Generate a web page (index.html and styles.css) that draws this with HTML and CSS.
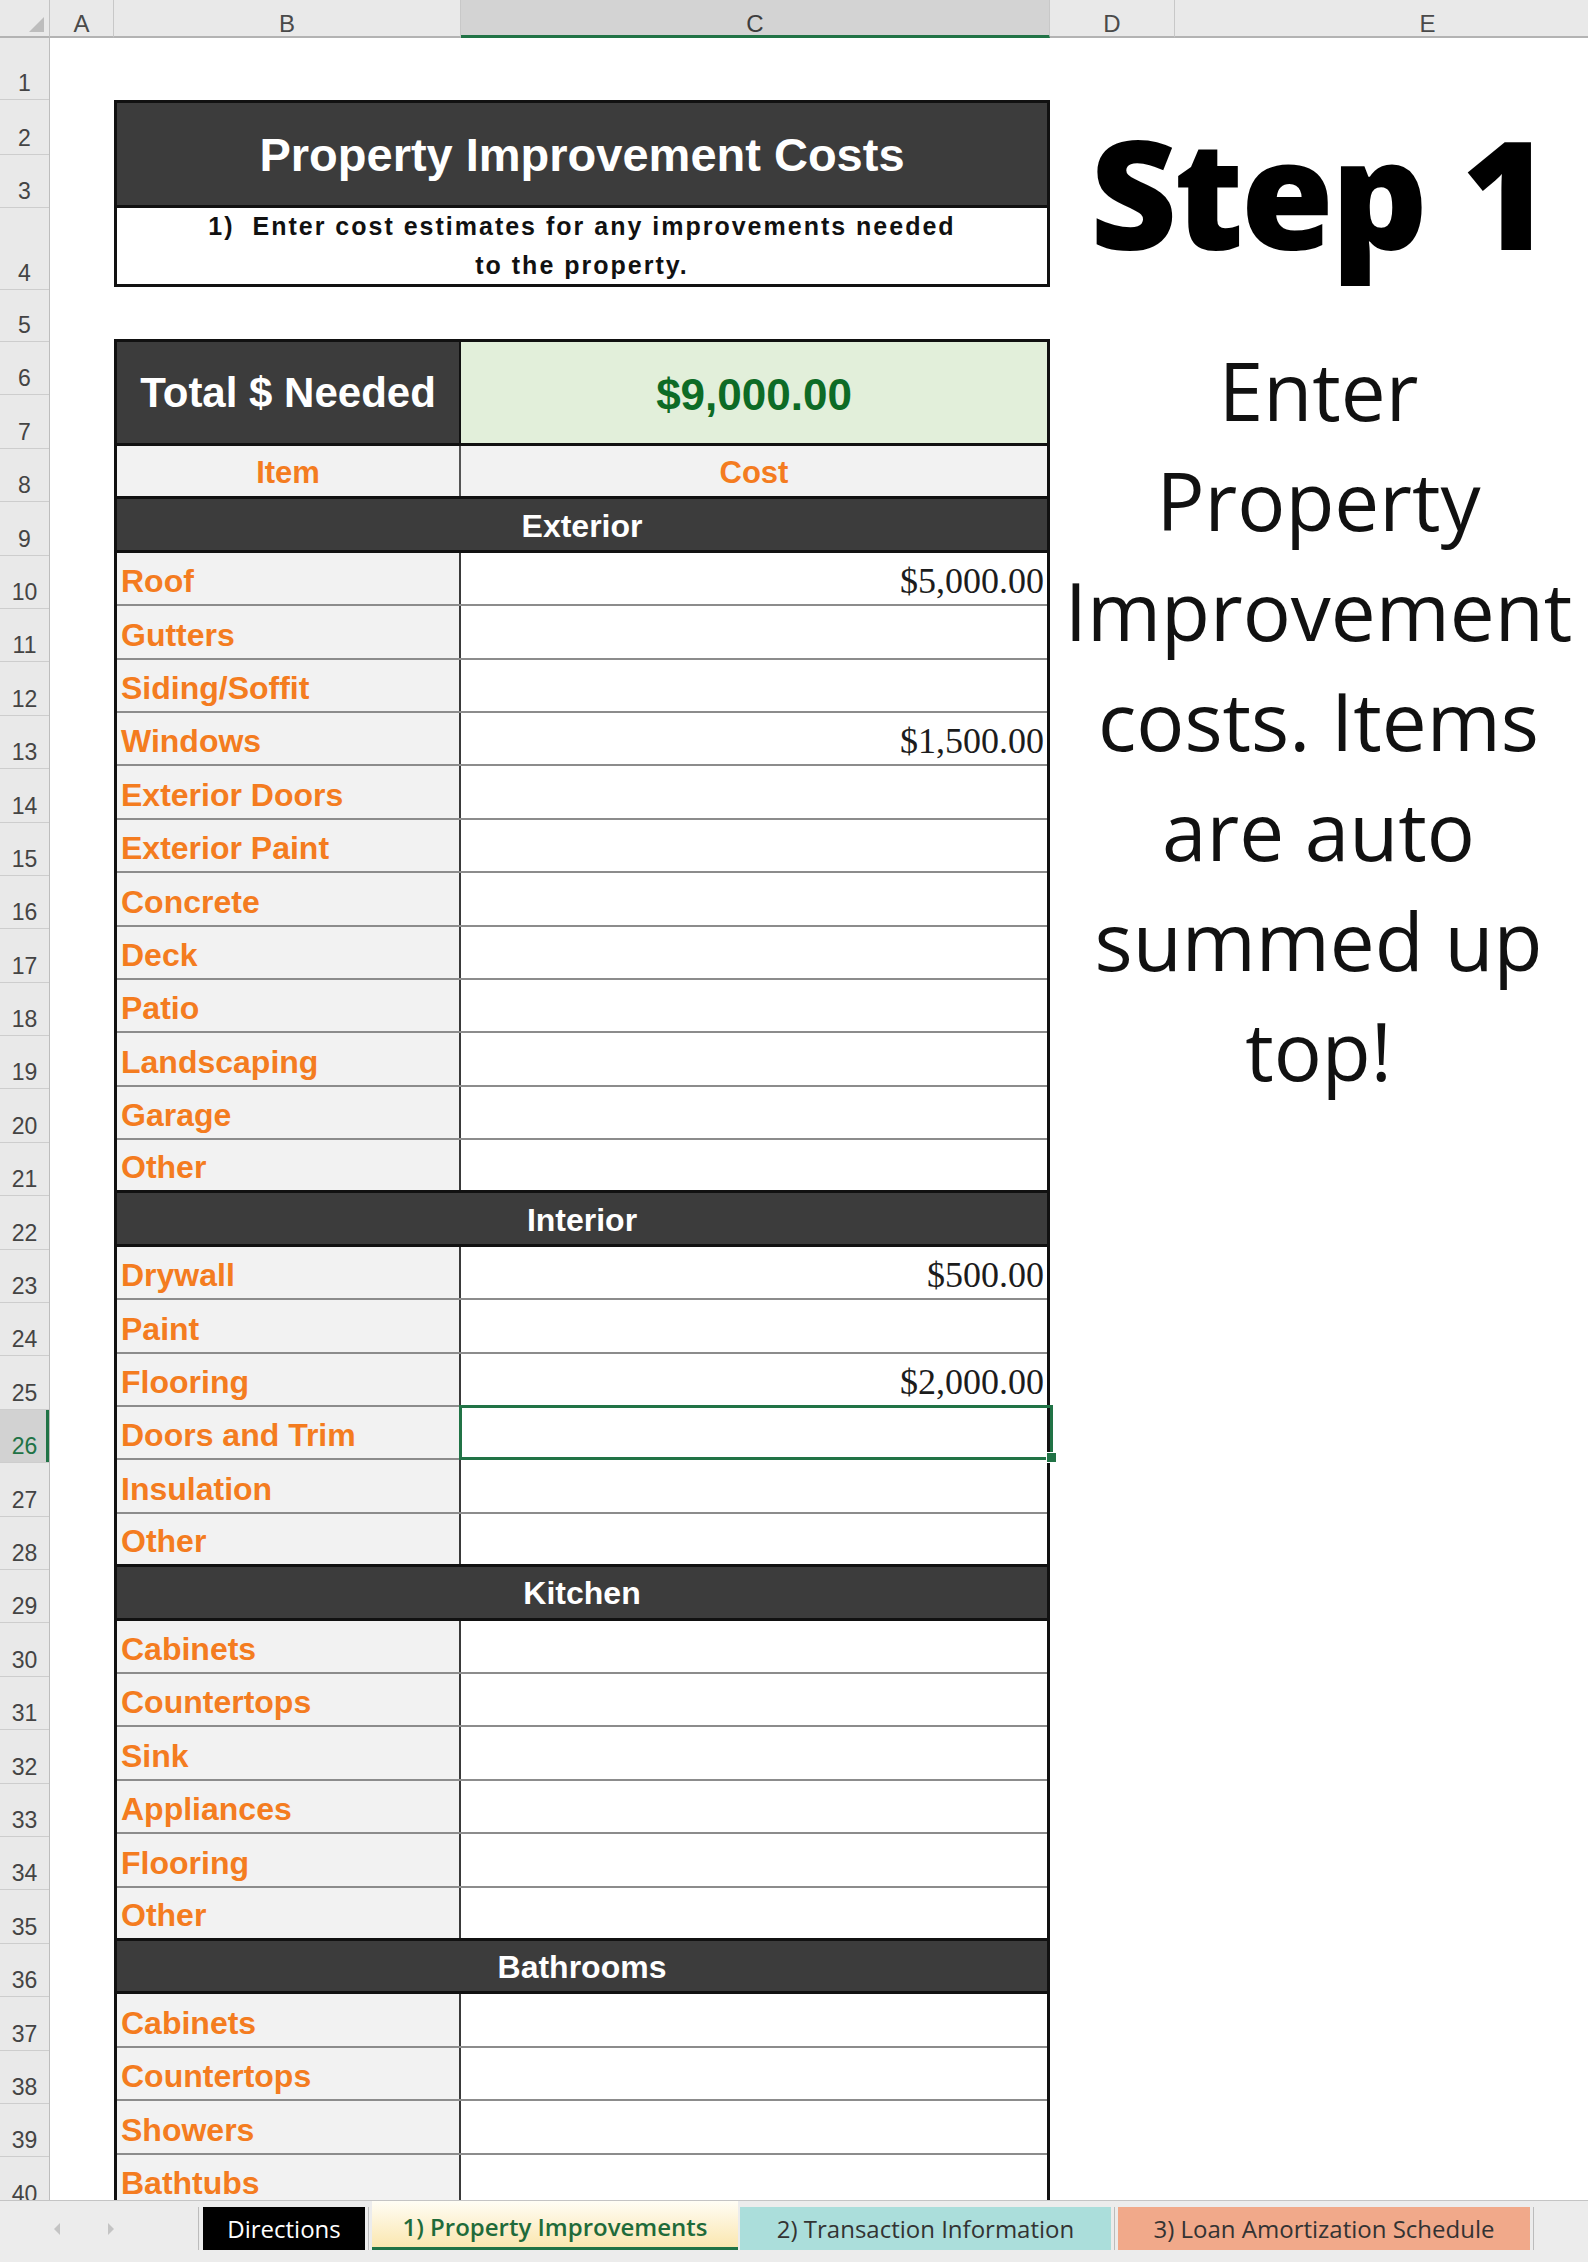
FILE: index.html
```html
<!DOCTYPE html>
<html lang="en">
<head>
<meta charset="utf-8">
<title>Property Improvement Costs</title>
<link rel="stylesheet" href="styles.css">
</head>
<body>
<div class="app">
  <div class="colhead">
    <div class="corner"><svg width="50" height="36" viewBox="0 0 50 36"><polygon points="44,17 44,32 29,32" fill="#bdbdbd"/></svg></div>
    <div class="ch a">A</div>
    <div class="ch b">B</div>
    <div class="ch c sel">C</div>
    <div class="ch d">D</div>
    <div class="ch e">E</div>
  </div>

  <div class="main">
    <div class="rowhead">
      <div class="rn r1">1</div>
      <div class="rn r2">2</div>
      <div class="rn r3">3</div>
      <div class="rn r4">4</div>
      <div class="rn r5">5</div>
      <div class="rn">6</div>
      <div class="rn">7</div>
      <div class="rn">8</div>
      <div class="rn">9</div>
      <div class="rn">10</div>
      <div class="rn">11</div>
      <div class="rn">12</div>
      <div class="rn">13</div>
      <div class="rn">14</div>
      <div class="rn">15</div>
      <div class="rn">16</div>
      <div class="rn">17</div>
      <div class="rn">18</div>
      <div class="rn">19</div>
      <div class="rn">20</div>
      <div class="rn">21</div>
      <div class="rn">22</div>
      <div class="rn">23</div>
      <div class="rn">24</div>
      <div class="rn">25</div>
      <div class="rn sel">26</div>
      <div class="rn">27</div>
      <div class="rn">28</div>
      <div class="rn">29</div>
      <div class="rn">30</div>
      <div class="rn">31</div>
      <div class="rn">32</div>
      <div class="rn">33</div>
      <div class="rn">34</div>
      <div class="rn">35</div>
      <div class="rn">36</div>
      <div class="rn">37</div>
      <div class="rn">38</div>
      <div class="rn">39</div>
      <div class="rn">40</div>
    </div>

    <div class="sheet">
      <div class="left">
        <div class="spacer1"></div>
        <div class="title-box">
          <div class="title-band">Property Improvement Costs</div>
          <div class="title-sub">1)&nbsp; Enter cost estimates for any improvements needed<br>to the property.</div>
        </div>
        <div class="spacer5"></div>

        <div class="tbl">
          <div class="trow total"><div class="b">Total $ Needed</div><div class="c">$9,000.00</div></div>
          <div class="trow hdr"><div class="b">Item</div><div class="c">Cost</div></div>

          <div class="trow section">Exterior</div>
          <div class="trow item"><div class="b">Roof</div><div class="c">$5,000.00</div></div>
          <div class="trow item"><div class="b">Gutters</div><div class="c"></div></div>
          <div class="trow item"><div class="b">Siding/Soffit</div><div class="c"></div></div>
          <div class="trow item"><div class="b">Windows</div><div class="c">$1,500.00</div></div>
          <div class="trow item"><div class="b">Exterior Doors</div><div class="c"></div></div>
          <div class="trow item"><div class="b">Exterior Paint</div><div class="c"></div></div>
          <div class="trow item"><div class="b">Concrete</div><div class="c"></div></div>
          <div class="trow item"><div class="b">Deck</div><div class="c"></div></div>
          <div class="trow item"><div class="b">Patio</div><div class="c"></div></div>
          <div class="trow item"><div class="b">Landscaping</div><div class="c"></div></div>
          <div class="trow item"><div class="b">Garage</div><div class="c"></div></div>
          <div class="trow item last"><div class="b">Other</div><div class="c"></div></div>

          <div class="trow section">Interior</div>
          <div class="trow item"><div class="b">Drywall</div><div class="c">$500.00</div></div>
          <div class="trow item"><div class="b">Paint</div><div class="c"></div></div>
          <div class="trow item"><div class="b">Flooring</div><div class="c">$2,000.00</div></div>
          <div class="trow item"><div class="b">Doors and Trim</div><div class="c sel"></div></div>
          <div class="trow item"><div class="b">Insulation</div><div class="c"></div></div>
          <div class="trow item last"><div class="b">Other</div><div class="c"></div></div>

          <div class="trow section">Kitchen</div>
          <div class="trow item"><div class="b">Cabinets</div><div class="c"></div></div>
          <div class="trow item"><div class="b">Countertops</div><div class="c"></div></div>
          <div class="trow item"><div class="b">Sink</div><div class="c"></div></div>
          <div class="trow item"><div class="b">Appliances</div><div class="c"></div></div>
          <div class="trow item"><div class="b">Flooring</div><div class="c"></div></div>
          <div class="trow item last"><div class="b">Other</div><div class="c"></div></div>

          <div class="trow section">Bathrooms</div>
          <div class="trow item"><div class="b">Cabinets</div><div class="c"></div></div>
          <div class="trow item"><div class="b">Countertops</div><div class="c"></div></div>
          <div class="trow item"><div class="b">Showers</div><div class="c"></div></div>
          <div class="trow item"><div class="b">Bathtubs</div><div class="c"></div></div>
        </div>
      </div>

      <div class="right">
        <div class="step">Step 1</div>
        <div class="desc">Enter<br>Property<br>Improvement<br>costs. Items<br>are auto<br>summed up<br>top!</div>
      </div>
    </div>
  </div>

  <div class="tabbar">
    <div class="tabs">
      <div class="nav">
        <svg class="arrow" width="10" height="14" viewBox="0 0 10 14"><polygon points="8,1 2,7 8,13" fill="#c4c4c4"/></svg>
        <svg class="arrow" width="10" height="14" viewBox="0 0 10 14"><polygon points="2,1 8,7 2,13" fill="#c4c4c4"/></svg>
      </div>
      <div class="sep s0"></div>
      <div class="tab dir">Directions</div>
      <div class="sep s1"></div>
      <div class="tab pi">1) Property Improvements</div>
      <div class="tab ti">2) Transaction Information</div>
      <div class="sep s2"></div>
      <div class="tab las">3) Loan Amortization Schedule</div>
      <div class="sep s3"></div>
    </div>
  </div>
</div>
</body>
</html>
```

FILE: styles.css
```css
* {
  box-sizing: border-box;
  margin: 0;
  padding: 0;
}

html, body {
  width: 1588px;
  height: 2262px;
  overflow: hidden;
  background: #ffffff;
}

body {
  font-family: "Liberation Sans", Arial, sans-serif;
  color: #111111;
}

.app {
  display: flex;
  flex-direction: column;
  height: 2262px;
}

/* ---------- column header ---------- */
.colhead {
  display: flex;
  flex: none;
  height: 38px;
  background: #e9e9e9;
  overflow: hidden;
}

.corner {
  width: 50px;
  flex: none;
  height: 38px;
  border-right: 1px solid #c3c3c3;
  border-bottom: 2px solid #b3b3b3;
}

.corner svg {
  display: block;
}

.ch {
  flex: none;
  height: 38px;
  border-right: 1px solid #c8c8c8;
  border-bottom: 2px solid #b3b3b3;
  text-align: center;
  font-size: 24px;
  line-height: 1;
  padding-top: 12px;
  color: #4a4a4a;
}

.ch.a { width: 64px; }
.ch.b { width: 347px; }
.ch.c { width: 589px; }
.ch.d { width: 125px; }
.ch.e { width: 506px; }

.ch.sel {
  background: #d3d3d3;
  border-bottom: 3px solid #217346;
  color: #3d3d3d;
}

/* ---------- main area ---------- */
.main {
  display: flex;
  flex: 1;
  overflow: hidden;
}

.rowhead {
  width: 50px;
  flex: none;
  background: #e9e9e9;
  border-right: 1px solid #bdbdbd;
}

.rn {
  height: 53.4px;
  border-bottom: 1px solid #cdcdcd;
  display: flex;
  align-items: flex-end;
  justify-content: center;
  font-size: 23px;
  line-height: 27px;
  padding-bottom: 2px;
  color: #444444;
}

.rn.r1 { height: 62px; }
.rn.r2 { height: 55px; }
.rn.r3 { height: 53px; }
.rn.r4 { height: 82px; }
.rn.r5 { height: 52px; }

.rn.sel {
  background: #d2d2d2;
  color: #217346;
  box-shadow: inset -3px 0 0 #217346;
}

.sheet {
  flex: 1;
  display: flex;
  align-items: flex-start;
  overflow: hidden;
}

.left {
  width: 999px;
  flex: none;
  padding-left: 64px;
}

.spacer1 { height: 62px; }
.spacer5 { height: 52px; }

/* ---------- title box ---------- */
.title-box {
  width: 936px;
  border: 3px solid #111111;
}

.title-band {
  height: 105px;
  background: #3c3c3c;
  border-bottom: 3px solid #111111;
  display: flex;
  align-items: center;
  justify-content: center;
  color: #ffffff;
  font-weight: bold;
  font-size: 47px;
}

.title-sub {
  height: 76px;
  display: flex;
  align-items: center;
  justify-content: center;
  text-align: center;
  font-weight: bold;
  font-size: 25px;
  letter-spacing: 2px;
  line-height: 39px;
  color: #111111;
}

/* ---------- cost table ---------- */
.tbl {
  width: 936px;
  border: 3px solid #111111;
  border-bottom: none;
}

.trow {
  display: flex;
  height: 53.4px;
}

.trow .b {
  width: 344px;
  flex: none;
  border-right: 2px solid #3a3a3a;
  display: flex;
}

.trow .c {
  flex: 1;
  display: flex;
}

.trow.total {
  height: 104px;
  border-bottom: 3px solid #111111;
}

.trow.total .b {
  background: #3c3c3c;
  border-right-color: #111111;
  align-items: center;
  justify-content: center;
  color: #ffffff;
  font-weight: bold;
  font-size: 42px;
}

.trow.total .c {
  background: #e2efda;
  align-items: center;
  justify-content: center;
  color: #0d6b26;
  font-weight: bold;
  font-size: 44px;
  padding-top: 4px;
}

.trow.hdr {
  border-bottom: 3px solid #111111;
}

.trow.hdr .b,
.trow.hdr .c {
  background: #f2f2f2;
  align-items: center;
  justify-content: center;
  color: #f47c20;
  font-weight: bold;
  font-size: 31px;
  padding-top: 4px;
}

.trow.hdr .b {
  border-right-color: #555555;
}

.trow.section {
  background: #3c3c3c;
  border-bottom: 3px solid #111111;
  align-items: center;
  justify-content: center;
  color: #ffffff;
  font-weight: bold;
  font-size: 32px;
  padding-top: 3px;
}

.trow.item {
  border-bottom: 2px solid #8c8c8c;
}

.trow.item.last {
  border-bottom: 3px solid #111111;
}

.trow.item .b {
  background: #f2f2f2;
  align-items: flex-end;
  padding-left: 4px;
  padding-bottom: 3px;
  color: #f47c20;
  font-weight: bold;
  font-size: 32px;
  line-height: 40px;
  white-space: nowrap;
}

.trow.item .c {
  background: #ffffff;
  align-items: flex-end;
  justify-content: flex-end;
  padding-right: 3px;
  padding-bottom: 1px;
  font-family: "Liberation Serif", "Times New Roman", serif;
  font-size: 36px;
  line-height: 44px;
  color: #1c1c1c;
}

.trow .c.sel {
  position: relative;
}

.trow .c.sel::after {
  content: "";
  position: absolute;
  left: -2px;
  right: -6px;
  top: -2px;
  bottom: -2px;
  border: 3px solid #217346;
}

.trow .c.sel::before {
  content: "";
  position: absolute;
  right: -10px;
  bottom: -5px;
  width: 9px;
  height: 9px;
  background: #217346;
  border: 1px solid #ffffff;
  z-index: 2;
}

/* ---------- right side notes ---------- */
.right {
  flex: 1;
  text-align: center;
  font-family: "Open Sans", "Noto Sans", sans-serif;
  color: #0d0d0d;
}

.step {
  margin-top: 78px;
  font-size: 151px;
  font-weight: 800;
  line-height: 151px;
  letter-spacing: -3px;
  color: #000000;
}

.desc {
  margin-top: 68px;
  font-size: 80px;
  line-height: 110px;
  font-weight: 400;
  color: #111111;
}

/* ---------- sheet tabs ---------- */
.tabbar {
  flex: none;
  height: 62px;
  background: #ececec;
  border-top: 1px solid #c4c4c4;
}

.tabs {
  display: flex;
  align-items: flex-end;
  height: 49px;
  font-family: "Open Sans", "Noto Sans", sans-serif;
  font-size: 24px;
}

.nav {
  width: 198px;
  height: 43px;
  flex: none;
  display: flex;
  align-items: center;
  padding-left: 52px;
  gap: 44px;
}

.arrow {
  display: block;
}

.sep {
  width: 1px;
  height: 43px;
  flex: none;
  background: #bcbcbc;
}

.sep.s0 { margin-right: 4px; }
.sep.s1 { margin: 0 3px 0 3px; }
.sep.s2 { margin: 0 3px 0 3px; }
.sep.s3 { margin-left: 3px; }

.tab {
  flex: none;
  height: 43px;
  display: flex;
  align-items: center;
  justify-content: center;
  white-space: nowrap;
  color: #333333;
}

.tab.dir {
  width: 162px;
  background: #000000;
  color: #ffffff;
}

.tab.pi {
  width: 366px;
  height: 49px;
  background: linear-gradient(#fffdf5, #fbe7b0);
  border-bottom: 3px solid #217346;
  color: #1f6b3a;
  font-weight: 600;
  padding-top: 4px;
}

.tab.ti {
  width: 371px;
  margin-left: 2px;
  background: #abdedb;
}

.tab.las {
  width: 412px;
  background: #f1a98a;
}
```
